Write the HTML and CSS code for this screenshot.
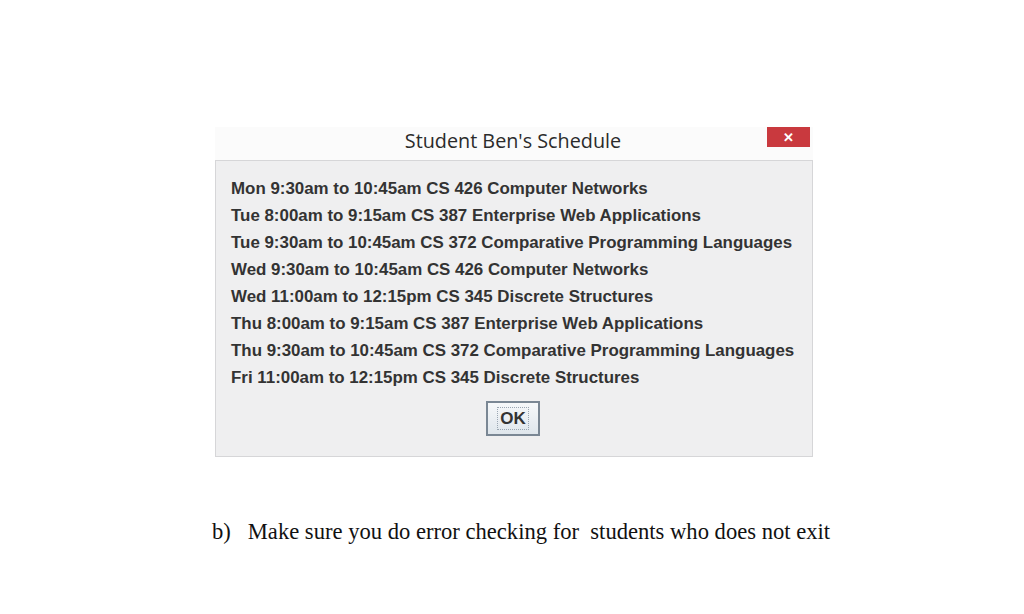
FILE: index.html
```html
<!DOCTYPE html>
<html lang="en">
<head>
  <meta charset="UTF-8" />
  <title>Student Ben's Schedule</title>
  <link rel="stylesheet" href="styles.css">
</head>
<body>
  <div class="page">
    <div class="janela">
      <div class="titulo">
        <span class="titulo-texto">Student Ben's Schedule</span>
        <span class="fechar">&#x2715;</span>
      </div>
      <div class="painel">
        <ul class="aulas">
          <li>Mon 9:30am to 10:45am CS 426 Computer Networks</li>
          <li>Tue 8:00am to 9:15am CS 387 Enterprise Web Applications</li>
          <li>Tue 9:30am to 10:45am CS 372 Comparative Programming Languages</li>
          <li>Wed 9:30am to 10:45am CS 426 Computer Networks</li>
          <li>Wed 11:00am to 12:15pm CS 345 Discrete Structures</li>
          <li>Thu 8:00am to 9:15am CS 387 Enterprise Web Applications</li>
          <li>Thu 9:30am to 10:45am CS 372 Comparative Programming Languages</li>
          <li>Fri 11:00am to 12:15pm CS 345 Discrete Structures</li>
        </ul>
        <div class="botoes">
          <button type="button"><span>OK</span></button>
        </div>
      </div>
    </div>

    <p class="nota">b)&nbsp;&nbsp; Make sure you do error checking for&nbsp; students who does not exit</p>
  </div>
</body>
</html>
```

FILE: styles.css
```css
body {
  margin: 0;
  background-color: #fff;
  font-family: "Liberation Sans", Arial, sans-serif;
}

.page {
  padding-top: 127px;
  padding-left: 215px;
}

.janela {
  width: 598px;
  background: #fbfbfb;
}

.titulo {
  height: 33px;
  display: flex;
  align-items: center;
  justify-content: center;
  position: relative;
}

.titulo-texto {
  font-family: "Open Sans", "Noto Sans", sans-serif;
  font-size: 19.8px;
  color: #2b2b2b;
  margin: -6px 0 0 -2px;
}

.fechar {
  position: absolute;
  top: 0;
  right: 3px;
  width: 43px;
  height: 20px;
  background: #c9393e;
  color: #fff;
  font-size: 13px;
  font-weight: bold;
  display: flex;
  align-items: center;
  justify-content: center;
}

.painel {
  background: #efeff0;
  border: 1px solid #d6d6d8;
  height: 297px;
  padding: 14px 15px 0;
  box-sizing: border-box;
}

.aulas {
  list-style: none;
  margin: 0;
  padding: 0;
}

.aulas li {
  font-size: 16.9px;
  font-weight: bold;
  color: #333;
  height: 27px;
  line-height: 27px;
  white-space: nowrap;
}

.botoes {
  display: flex;
  justify-content: center;
  margin-top: 10px;
}

button {
  width: 54px;
  height: 35px;
  border: 2px solid #7a8794;
  background: linear-gradient(#f6f8fa, #dfe6ec);
  font-family: "Liberation Sans", Arial, sans-serif;
  font-size: 17px;
  font-weight: bold;
  color: #333;
  padding: 0;
  margin-left: -2px;
}

button span {
  border: 1px dotted #9aa6b2;
  padding: 1px 2px;
}

.nota {
  font-family: "Liberation Serif", "Times New Roman", serif;
  font-size: 22.6px;
  color: #111;
  margin: 62px 0 0 -3px;
}
```
